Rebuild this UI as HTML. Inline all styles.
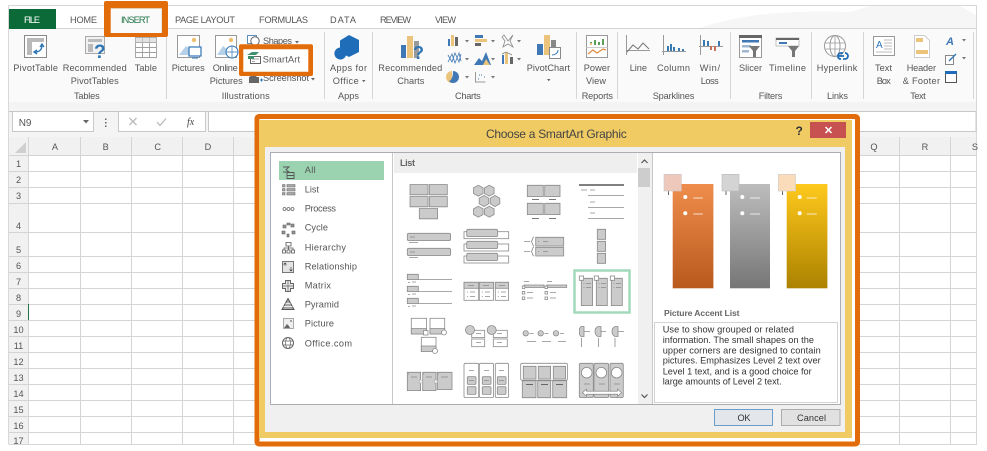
<!DOCTYPE html>
<html><head><meta charset="utf-8"><style>
html,body{margin:0;padding:0;background:#fff;width:987px;height:451px;overflow:hidden}
svg{display:block;filter:blur(.35px)}
text{font-family:"Liberation Sans",sans-serif;font-size:9.2px;fill:#555;white-space:pre}
.g{fill:#cbcbcb;stroke:#8a8a8a;stroke-width:.8}
.w{fill:#fff;stroke:#8a8a8a;stroke-width:.8}
.l{stroke:#8a8a8a;stroke-width:.8;fill:none}
.i{fill:none;stroke:#777;stroke-width:1}
</style></head><body>
<svg width="987" height="451" viewBox="0 0 987 451" xmlns="http://www.w3.org/2000/svg">
<defs>
<linearGradient id="o" x1="0" y1="0" x2="0" y2="1"><stop offset="0" stop-color="#ef8d4c"/><stop offset="1" stop-color="#b9591c"/></linearGradient>
<linearGradient id="h" x1="0" y1="0" x2="0" y2="1"><stop offset="0" stop-color="#bdbdbd"/><stop offset="1" stop-color="#767676"/></linearGradient>
<linearGradient id="y" x1="0" y1="0" x2="0" y2="1"><stop offset="0" stop-color="#ffc91c"/><stop offset="1" stop-color="#ac8200"/></linearGradient>
</defs>
<rect width="987" height="451" fill="#fff"/>
<!-- window -->
<rect x="8.5" y="5.5" width="968" height="439" fill="#fff" stroke="#d8d8d8"/>
<rect x="9" y="6" width="967" height="22" fill="#fff"/>
<path d="M700 28C740 14 790 10 850 12L870 6H960L976 15V28Z" fill="#f6f6f6"/>
<rect x="9" y="28" width="967" height="74" fill="#fafafa"/>
<line x1="9" y1="28.5" x2="976" y2="28.5" stroke="#d4d4d4"/>
<rect x="9" y="102" width="967" height="35" fill="#f4f4f4"/>
<line x1="9" y1="111.5" x2="976" y2="111.5" stroke="#c6c6c6"/>
<!-- tabs -->
<rect x="9" y="9" width="47" height="20" fill="#0b6a38"/>
<text x="24" y="23" textLength="16" style="fill:#fff">FILE</text>
<text x="70" y="23" textLength="27">HOME</text>
<rect x="110" y="8" width="52" height="26" fill="#fafafa" stroke="#d4d4d4"/>
<text x="121" y="23" textLength="29" style="fill:#217346">INSERT</text>
<text x="175" y="23" textLength="60">PAGE LAYOUT</text>
<text x="259" y="23" textLength="49">FORMULAS</text>
<text x="330" y="23" textLength="26">DATA</text>
<text x="380" y="23" textLength="31">REVIEW</text>
<text x="435" y="23" textLength="21">VIEW</text>
<!-- separators -->
<path d="M166.5 32V99M324.5 32V99M372.5 32V99M576.5 32V99M617.5 32V99M730.5 32V99M811.5 32V99M863.5 32V99M973.500 32V99" stroke="#d6d6d6"/>
<!-- ribbon labels -->
<g>
<text x="13.3" y="71" textLength="44.7">PivotTable</text>
<text x="62.7" y="71" textLength="64">Recommended</text>
<text x="70.7" y="84" textLength="48">PivotTables</text>
<text x="134.7" y="71" textLength="22.3">Table</text>
<text x="74" y="99" textLength="25.7">Tables</text>
<text x="171.7" y="71" textLength="33">Pictures</text>
<text x="212.7" y="71" textLength="25">Online</text>
<text x="209.7" y="84" textLength="33">Pictures</text>
<text x="263" y="44" textLength="29">Shapes</text>
<text x="263" y="81" textLength="46">Screenshot</text>
<text x="221.7" y="99" textLength="48">Illustrations</text>
<text x="330" y="71" textLength="37">Apps for</text>
<text x="332.7" y="84" textLength="26">Office</text>
<text x="338" y="99" textLength="21">Apps</text>
<text x="378.3" y="71" textLength="64">Recommended</text>
<text x="397.3" y="84" textLength="27">Charts</text>
<text x="455" y="99" textLength="25.7">Charts</text>
<text x="526.7" y="71" textLength="43.3">PivotChart</text>
<text x="583.7" y="71" textLength="26.3">Power</text>
<text x="586" y="84" textLength="20">View</text>
<text x="581.7" y="99" textLength="31.3">Reports</text>
<text x="629.7" y="71" textLength="17.3">Line</text>
<text x="657" y="71" textLength="33">Column</text>
<text x="699.7" y="71" textLength="20.3">Win/</text>
<text x="700.7" y="84" textLength="18">Loss</text>
<text x="652.7" y="99" textLength="41.6">Sparklines</text>
<text x="739" y="71" textLength="23">Slicer</text>
<text x="769" y="71" textLength="37">Timeline</text>
<text x="758.7" y="99" textLength="23.6">Filters</text>
<text x="816.7" y="71" textLength="40.6">Hyperlink</text>
<text x="827" y="99" textLength="21">Links</text>
<text x="875" y="71" textLength="17">Text</text>
<text x="876.7" y="84" textLength="14">Box</text>
<text x="906.7" y="71" textLength="29.3">Header</text>
<text x="902.7" y="84" textLength="37.3">&amp; Footer</text>
<text x="910.3" y="99" textLength="15.4">Text</text>
</g>
<path d="M295 41h4l-2 2.5zM311 78h4l-2 2.5zM362 80h3.5l-1.7 2.2zM547 79h3.5l-1.7 2.2z" fill="#666"/>
<!-- icons: tables -->
<rect x="24.5" y="35.5" width="22" height="22" fill="#fff" stroke="#888"/>
<path d="M27 38h17v4H32v13h-5z" fill="#b9b9b9"/>
<path d="M35 52c4 0 7-2 7-7M40 47l2-3 2 3M37 50l-3 2 3 2" fill="none" stroke="#2e75b6" stroke-width="1.4"/>
<rect x="85.5" y="36.5" width="19" height="17" fill="#f1f1f1" stroke="#aaa"/>
<path d="M88 39h14v3H88zM88 44h5v8h-5z" fill="#bbb"/>
<text x="94" y="58" style="font-size:19px;font-weight:bold;fill:#2e75b6">?</text>
<path d="M135.5 37.5h21v20h-21zM135.5 42.5h21M135.5 47.5h21M135.5 52.5h21M142.5 37.5v20M149.5 37.5v20" fill="#fff" stroke="#a0a0a0" stroke-width=".9"/>
<rect x="135.5" y="37.5" width="21" height="5" fill="#d0d0d0" opacity=".6"/>
<!-- pictures -->
<rect x="177.5" y="35.5" width="22" height="22" fill="#fff" stroke="#999"/>
<path d="M179 55l7-9 5 4 3 5z" fill="#b6d0e8"/><circle cx="194" cy="40" r="2.2" fill="#ecc06f"/>
<rect x="189" y="47" width="12" height="9" fill="#fff" stroke="#2e75b6" stroke-width="1.2"/><path d="M192 58h6" stroke="#2e75b6"/>
<rect x="215.5" y="35.5" width="21" height="22" fill="#fff" stroke="#999"/>
<path d="M217 55l6-9 5 4 3 5z" fill="#b6d0e8"/><circle cx="231" cy="40" r="2.2" fill="#ecc06f"/>
<circle cx="232" cy="52" r="6" fill="#fff" stroke="#2e75b6"/><path d="M226 52h12M232 46v12" stroke="#2e75b6" stroke-width=".7"/>
<rect x="247.5" y="35.5" width="9" height="8" fill="#fff" stroke="#5b8dbd"/><circle cx="255" cy="41" r="4.2" fill="#fff" stroke="#666"/>
<path d="M249 77l3-1.5h3l2 1.5h2v6h-10z" fill="#666"/><path d="M260 80h3M261.5 78.5v3" stroke="#2e75b6"/>
<!-- apps -->
<path d="M349 35l10 5v12l-10 5-3-1.500a6 6 0 1 1-6-8v-7z" fill="#1f6cb8"/>
<!-- recommended charts -->
<rect x="401" y="45" width="5" height="13" fill="#3f78b5"/><rect x="407" y="36" width="6" height="22" fill="#ecc37a"/><rect x="414" y="41" width="5" height="17" fill="#9a9a9a"/>
<text x="413" y="59" style="font-size:18px;font-weight:bold;fill:#2e75b6">?</text>
<!-- small charts -->
<rect x="448" y="39" width="2" height="7" fill="#3f78b5"/><rect x="451" y="35" width="3" height="11" fill="#ecc37a"/><rect x="455" y="37" width="3" height="9" fill="#666"/>
<path d="M465 40h4l-2 2.500zM491 40h4l-2 2.500zM517 40h4l-2 2.500zM465 58h4l-2 2.500zM491 58h4l-2 2.500zM517 58h4l-2 2.500zM465 76h4l-2 2.500zM491 76h4l-2 2.500z" fill="#777"/>
<rect x="475" y="35" width="8" height="3" fill="#3f78b5"/><rect x="475" y="39" width="12" height="3" fill="#ecc37a"/><rect x="475" y="43" width="6" height="3" fill="#666"/>
<path d="M504 35l4 6 5-6 -3 6 3 6-5-3-5 3 2-6-3-4z" fill="none" stroke="#888" stroke-width=".8"/>
<path d="M448 55l4 7 3-9 4 9 2-8M448 62l4-8 3 9 4-10 2 8" fill="none" stroke="#3f78b5" stroke-width=".8"/>
<path d="M474 65l5-7 3 3 4-9 5 13z" fill="#3f78b5"/><path d="M483 65l3-6 4 6z" fill="#ecc37a"/>
<rect x="502" y="55" width="2" height="9" fill="#3f78b5"/><rect x="505" y="53" width="3" height="11" fill="#ecc37a"/><rect x="510" y="57" width="3" height="7" fill="#666"/><path d="M502 54l4-2 6 3" fill="none" stroke="#777" stroke-width=".7"/>
<path d="M453 71a6 6 0 1 0 0 12z" fill="#ecc37a" transform="translate(-1)"/><path d="M453 71a6 6 0 0 1 0 12c-2 0-3-1-4-2 3-1 4-5 4-10z" fill="#3f78b5"/>
<path d="M475.500 72v10h10" stroke="#999" fill="none"/><path d="M478 79h1M481 75h1M484 77h1M479 75h1" stroke="#3f78b5"/>
<!-- pivotchart -->
<rect x="537" y="44" width="6" height="11" fill="#3f78b5"/><rect x="544" y="35" width="6" height="20" fill="#ecc37a"/><rect x="551" y="40" width="5" height="15" fill="#888"/>
<rect x="549.500" y="47.500" width="11" height="11" fill="#fff" stroke="#888"/><path d="M552 55c3 0 6-2 6-5" fill="none" stroke="#2e75b6"/>
<!-- power view -->
<rect x="586.500" y="35.500" width="21" height="22" fill="#fff" stroke="#999"/>
<path d="M590 45v-3h2v3zM594 45v-5h2v5zM598 45v-3h2v3zM602 45v-6h2v6z" fill="#5aa05a"/><path d="M590 45v-2h2v2z" fill="#ecc37a"/>
<path d="M588 54l5-4 4 3 6-4 3 1" fill="none" stroke="#e08a3c" stroke-width="1.200"/><path d="M586.500 47.500h21" stroke="#ccc"/>
<!-- sparklines -->
<path d="M626.500 35v20M626 50.500h24" stroke="#999" fill="none"/><path d="M627 52l6-7 5 4 5-6 6 6" fill="none" stroke="#777"/>
<path d="M663.500 35v20M662 51.500h24" stroke="#999" fill="none"/><path d="M667 46h2v5h-2zM670 44h2v7h-2zM673 47h2v4h-2zM678 48h2v3h-2zM682 49h2v2h-2z" fill="#3a7ab0"/>
<path d="M700.500 35v20M699 46.500h24" stroke="#999" fill="none"/><path d="M703 40h2v6h-2zM707 41h2v5h-2zM718 41h2v5h-2z" fill="#3a7ab0"/><path d="M710 46h2v4h-2zM714 46h2v5h-2z" fill="#c7735a"/>
<!-- filters -->
<rect x="739.500" y="35.500" width="22" height="22" fill="#fff" stroke="#999"/>
<rect x="739" y="35" width="23" height="3" fill="#666"/>
<rect x="742" y="40" width="17" height="2.500" fill="#3f78b5"/><rect x="742" y="45" width="9" height="2.500" fill="#9fb8d0"/><rect x="742" y="50" width="7" height="2.500" fill="#9fb8d0"/>
<path d="M749 46h11l-4 5v6h-3v-6z" fill="#777"/>
<rect x="776" y="38" width="23" height="8" fill="#fff" stroke="#aaa" stroke-width=".7"/><rect x="776" y="38" width="23" height="2" fill="#666"/><rect x="779" y="42" width="8" height="2" fill="#3f78b5"/><path d="M788 46h11l-4 5v6h-3v-6z" fill="#777"/>
<!-- hyperlink -->
<circle cx="835" cy="46" r="10.500" fill="#fff" stroke="#999"/><ellipse cx="835" cy="46" rx="5" ry="10.500" fill="none" stroke="#999"/><path d="M825 43h20M825 49h20M835 35v22" stroke="#999" stroke-width=".8"/>
<path d="M838 56a3 3 0 0 1 3-3h2M846 53h-1a3 3 0 0 1 0 6h-2M844 56h-5M841 59h-1a3 3 0 0 1-2-3" fill="none" stroke="#1f6cb8" stroke-width="1.800"/>
<!-- text -->
<rect x="873.500" y="36.500" width="21" height="19" fill="#fff" stroke="#999"/>
<text x="876" y="48" style="font-size:10px;fill:#2e75b6">A</text><path d="M884 40h8M884 43h8M884 46h8M884 49h8M876 52h16" stroke="#bbb"/>
<path d="M914.500 35.500h10l5 5v17h-15z" fill="#fff" stroke="#ccc"/><rect x="916" y="38" width="7" height="4" fill="#ecc37a"/><rect x="916" y="50" width="12" height="4" fill="#ecc37a"/>
<text x="946" y="45" style="font-size:11px;font-weight:bold;font-style:italic;fill:#3f78b5">A</text>
<path d="M962 39h4l-2 2.500zM962 57h4l-2 2.500z" fill="#777"/>
<path d="M945.500 55.500h8v9h-8z" fill="#fff" stroke="#888"/><path d="M949 61l7-7" stroke="#2e75b6" stroke-width="1.300"/>
<rect x="945.500" y="71.500" width="11" height="11" fill="#fff" stroke="#555"/><rect x="945" y="71" width="12" height="3" fill="#1f6cb8"/>
<!-- formula bar -->
<rect x="12.500" y="111.500" width="81" height="20" fill="#fff" stroke="#c8c8c8"/>
<text x="18.700" y="126" style="font-size:10px">N9</text>
<path d="M83 120h6l-3 3.500z" fill="#666"/>
<path d="M105 118.500h1.500v1.500H105zM105 122h1.500v1.500H105zM105 125.500h1.500v1.500H105z" fill="#666"/>
<rect x="118.500" y="111.500" width="87" height="20" fill="#fff" stroke="#c8c8c8"/>
<path d="M129.500 118l7 7M136.500 118l-7 7" stroke="#bbb" stroke-width="1.300"/>
<path d="M157 122l3 3.500 6-7" fill="none" stroke="#bbb" stroke-width="1.300"/>
<text x="187" y="125" style="font-size:10px;font-family:'Liberation Serif',serif;font-style:italic;fill:#444">fx</text>
<rect x="208.500" y="111.500" width="767.500" height="20" fill="#fff" stroke="#c8c8c8"/>
<!-- sheet -->
<rect x="9" y="137" width="967" height="18" fill="#f1f1f1"/>
<rect x="9" y="155" width="19" height="289" fill="#f1f1f1"/>
<path d="M28.500 137V444M80.500 137V444M131.500 137V444M182.500 137V444M233.500 137V444M848.500 137V444M899.500 137V444M950.500 137V444" stroke="#d4d4d4"/>
<path d="M9 155.500H976M9 171.500H976M9 187.500H976M9 203.500H976M9 232.500H976M9 256.500H976M9 272.500H976M9 288.500H976M9 304.500H976M9 320.500H976M9 336.500H976M9 352.500H976M9 368.500H976M9 384.500H976M9 400.500H976M9 416.500H976M9 432.500H976" stroke="#d4d4d4"/>
<path d="M26 142v11H15z" fill="#cfcfcf"/>
<rect x="28" y="304" width="1" height="16" fill="#217346"/>
<g style="text-anchor:middle">
<text x="55" y="150">A</text><text x="105.700" y="150">B</text><text x="157.700" y="150">C</text><text x="208" y="150">D</text><text x="874" y="150">Q</text><text x="925" y="150">R</text><text x="975" y="150">S</text>
<text x="18.500" y="167">1</text><text x="18.500" y="183">2</text><text x="18.500" y="199">3</text><text x="18.500" y="229">4</text><text x="18.500" y="253">5</text><text x="18.500" y="269">6</text><text x="18.500" y="285">7</text><text x="18.500" y="301">8</text><text x="18.500" y="317">9</text><text x="18.500" y="333">10</text><text x="18.500" y="349">11</text><text x="18.500" y="365">12</text><text x="18.500" y="381">13</text><text x="18.500" y="397">14</text><text x="18.500" y="413">15</text><text x="18.500" y="429">16</text><text x="18.500" y="444">17</text>
</g>
<rect x="0" y="444.500" width="250" height="7" fill="#fff"/>
<line x1="9" y1="444.500" x2="254" y2="444.500" stroke="#d8d8d8"/>
<!-- dialog -->
<rect x="257" y="116.500" width="600.500" height="327.500" rx="2" fill="#fff" stroke="#e36c0a" stroke-width="5"/>
<rect x="259" y="120" width="593" height="318" fill="#f0cb64"/>
<rect x="265" y="147" width="580" height="285" fill="#f0f0f0"/>
<text x="486" y="138" textLength="140.700" style="font-size:12px;fill:#444">Choose a SmartArt Graphic</text>
<text x="795.500" y="135" style="font-size:12px;font-weight:bold;fill:#333">?</text>
<rect x="810" y="122" width="36" height="16" fill="#c75050"/>
<path d="M825.500 127l6 6M831.500 127l-6 6" stroke="#fff" stroke-width="1.500"/>
<rect x="270.500" y="152.500" width="570" height="252" fill="#fff" stroke="#abadb3"/>
<path d="M392.500 153V404M652.500 153V404" stroke="#c8c8c8"/>
<!-- left list -->
<rect x="279" y="161" width="105" height="19" fill="#9bd3b0"/>
<g>
<text x="304.700" y="173" textLength="11">All</text>
<text x="304.700" y="192.300" textLength="14.300">List</text>
<text x="304.700" y="211.700" textLength="31.300">Process</text>
<text x="304.700" y="230.700" textLength="23.300">Cycle</text>
<text x="304.700" y="250.300" textLength="41.300">Hierarchy</text>
<text x="304.700" y="269.700" textLength="52.300">Relationship</text>
<text x="304.700" y="288.700" textLength="26.300">Matrix</text>
<text x="304.700" y="307.700" textLength="34.300">Pyramid</text>
<text x="304.700" y="326.700" textLength="29.300">Picture</text>
<text x="304.700" y="346.300" textLength="47.300">Office.com</text>
</g>
<!-- left icons -->
<path d="M283 167h6l-3 2.500 3 2.500h-6M287 172.500h7v6h-7zM287 175.500h7" fill="none" stroke="#555" stroke-width=".9"/>
<path d="M282.500 184.500h2.500v2.500h-2.500zM282.500 188.500h2.500v2.500h-2.500zM282.500 192.500h2.500v2.500h-2.500zM287 184.500h8v2.500h-8zM287 188.500h8v2.500h-8zM287 192.500h8v2.500h-8z" fill="#aaa" stroke="#666" stroke-width=".6"/>
<g fill="none" stroke="#666" stroke-width=".8"><circle cx="284.500" cy="209" r="1.500"/><circle cx="288.500" cy="209" r="1.500"/><circle cx="292.500" cy="209" r="1.500"/></g>
<path d="M283 225h3v3h-3zM291 224h3v3h-3zM282 231h3v3h-3zM292 231h3v3h-3zM287 223h3v2h-3zM287 234h2v3h-2z" fill="#999" stroke="#555" stroke-width=".6"/>
<path d="M286 242.500h5v3.500h-5zM282.500 250h3v3h-3zM287 250h3v3h-3zM291.500 250h3v3h-3zM284 250v-2h9v2M288.500 246v4" fill="none" stroke="#555" stroke-width=".8"/>
<rect x="282.500" y="261.500" width="11" height="11" fill="#e4e4e4" stroke="#777"/><path d="M285 266v-3l-1.500 1.500M285 263l1.500 1.500M291 267v4l-1.500-1.500M291 271l1.500-1.500" fill="none" stroke="#444" stroke-width=".7"/>
<path d="M285.500 280.500h5v3h3v5h-3v3h-5v-3h-3v-5h3z" fill="#e4e4e4" stroke="#666"/><path d="M288 280v12M282 286h12" stroke="#666" stroke-width=".7"/>
<path d="M288 298.500l6 11h-12z" fill="#aaa" stroke="#555"/><path d="M285.500 303.500h5M283.500 306.500h9" stroke="#fff" stroke-width=".8"/>
<rect x="283.500" y="318.500" width="10" height="10" fill="#eee" stroke="#aaa"/><path d="M284 328l3-4 2 2 1 2z" fill="#666"/><circle cx="291" cy="321" r="1" fill="#888"/>
<circle cx="288" cy="343" r="5.500" fill="none" stroke="#666"/><ellipse cx="288" cy="343" rx="2.500" ry="5.500" fill="none" stroke="#666" stroke-width=".7"/><path d="M282.500 341h11M282.500 345h11" stroke="#666" stroke-width=".7"/>
<!-- middle header and scrollbar -->
<rect x="394" y="153" width="243" height="20" fill="#efefef"/>
<text x="400" y="166" style="font-weight:bold;fill:#666" textLength="15">List</text>
<rect x="638" y="153" width="14" height="251" fill="#f0f0f0"/>
<rect x="638" y="168" width="12" height="19" fill="#cdcdcd"/>
<path d="M641.500 163l3-3 3 3M641.500 394.500l3 3 3-3" fill="none" stroke="#555" stroke-width="1.200"/>
<!-- r1 -->
<path class="g" d="M410 184.500h18v10.300h-18zM429.300 184.500h18v10.300h-18zM410 196.500h18v10.300h-18zM429.300 196.500h18v10.300h-18zM419.300 208.500h18.300v10.300h-18.300z"/>
<g class="g"><path d="M478.300 185.200l4.800 2.700v5.600l-4.800 2.700-4.800-2.700v-5.600zM489.300 185.200l4.800 2.700v5.600l-4.800 2.700-4.800-2.700v-5.600zM484 195.500l4.800 2.700v5.600l-4.800 2.700-4.800-2.700v-5.600zM495 195.500l4.800 2.700v5.600l-4.800 2.700-4.800-2.700v-5.600zM478.300 206.200l4.800 2.700v5.600l-4.800 2.700-4.800-2.700v-5.600zM489.300 206.200l4.800 2.700v5.600l-4.800 2.700-4.800-2.700v-5.600z"/></g>
<path class="g" d="M527.300 185.300h16v11.300h-16zM544.700 185.300h15.300v11.300h-15.300zM527.300 203.300h16v11.300h-16zM544.700 203.300h15.300v11.300h-15.300z"/>
<path d="M532 199.500h7M549 199.500h7M532 218.500h7M549 218.500h7" stroke="#777"/>
<rect x="579" y="184" width="45" height="2" fill="#808080"/>
<path class="l" d="M588 195.500h36M588 207.500h36M588 218.500h36M581 190h6M590 190h5M590 202h5M590 213h5"/>
<!-- r2 -->
<g class="g"><rect x="407.300" y="233.300" width="43.300" height="7.300" rx="1.500"/><rect x="407.300" y="248.300" width="43.300" height="7.300" rx="1.500"/></g>
<path class="l" d="M409 242.500h9M409 257.500h9M410 237h5M410 252h5"/>
<g class="w"><rect x="464" y="231.700" width="44.700" height="7"/><rect x="464" y="244" width="44.700" height="7"/><rect x="464" y="256" width="44.700" height="7"/></g>
<g class="g"><rect x="466.700" y="229.300" width="31" height="7.300" rx="1.500"/><rect x="466.700" y="241.300" width="31" height="7.300" rx="1.500"/><rect x="466.700" y="253.300" width="31" height="7.300" rx="1.500"/></g>
<path class="g" d="M535.700 237.300h28v8.700h-28zM535.700 247.300h28v8.700h-28z"/>
<path class="l" d="M524 241.500h6M524 251.500h6M534 237c-2 0-1 4-3 4.500 2 .5 1 4.500 3 4.500M534 247c-2 0-1 4-3 4.500 2 .5 1 4.500 3 4.500M538 241.500h1M543 241.500h5M538 251.500h1M543 251.500h5"/>
<path class="g" d="M597.300 229.300h8.300v10h-8.300zM597.300 241.300h8.300v10h-8.300zM597.300 253.300h8.300v10h-8.300z"/>
<!-- r3 -->
<path class="g" d="M407.300 274.300h11v5.300h-11zM407.300 286.300h11v5.300h-11zM407.300 298.300h11v5.300h-11z"/>
<path class="l" d="M418 279.500h34M418 291.500h34M418 303.500h34M408 282.500h2M412 282h4M408 294.500h2M412 294h4M408 306.500h2M412 306h4"/>
<g class="w"><rect x="464" y="282.300" width="14.700" height="18"/><rect x="479.300" y="282.300" width="14.300" height="18"/><rect x="495.300" y="282.300" width="13.300" height="18"/></g>
<g class="g"><rect x="464" y="282.300" width="14.700" height="6"/><rect x="479.300" y="282.300" width="14.300" height="6"/><rect x="495.300" y="282.300" width="13.300" height="6"/></g>
<path class="l" d="M468 285.500h6M483 285.500h6M499 285.500h6M467 292h1M470 292h5M467 296.500h1M470 296.500h5M482 292h1M485 292h5M482 296.500h1M485 296.500h5M498 292h1M501 292h5M498 296.500h1M501 296.500h5M524 281.500h5M547 281.500h5"/>
<path class="g" d="M524 285h20v2.500h-20zM546.700 285h20v2.500h-20z"/>
<g class="w"><rect x="522.300" y="286" width="2.500" height="2.500"/><rect x="522.300" y="291.500" width="2.500" height="2.500"/><rect x="522.300" y="297" width="2.500" height="2.500"/><rect x="545" y="286" width="2.500" height="2.500"/><rect x="545" y="291.500" width="2.500" height="2.500"/><rect x="545" y="297" width="2.500" height="2.500"/></g>
<path class="l" d="M527 292.500h6M527 298h6M550 292.500h6M550 298h6"/>
<rect x="574.500" y="270.500" width="55" height="42" fill="#fff" stroke="#a3d9bb" stroke-width="2.500"/>
<path class="g" d="M581.300 278.300h11.300v27.300h-11.300zM596.300 278.300h11v27.300h-11zM611.300 278.300h11v27.300h-11z"/>
<g class="w"><rect x="579.300" y="276" width="4.300" height="4.300"/><rect x="594.300" y="276" width="4.300" height="4.300"/><rect x="610.300" y="276" width="4.300" height="4.300"/></g>
<path class="l" d="M583.500 283.500h1M586 283.500h5M583.500 287.500h1M586 287.500h5M598.500 283.500h1M601 283.500h5M598.500 287.500h1M601 287.500h5M613.500 283.500h1M616 283.500h5M613.500 287.500h1M616 287.500h5"/>
<!-- r4 -->
<g class="w"><rect x="411.300" y="318.300" width="15.300" height="15.700"/><rect x="430" y="318.300" width="14.700" height="15.700"/><rect x="421.300" y="337.300" width="14.700" height="14.300"/></g>
<path class="g" d="M411.300 328.500h15.300v5.500h-15.300zM430 328.500h14.700v5.500h-14.700zM421.300 346h14.700v5.600h-14.700z"/>
<rect class="w" x="423.500" y="330.500" width="4.500" height="4.500"/><circle class="w" cx="444" cy="332.500" r="2.500"/><circle class="w" cx="435" cy="351" r="2.500"/>
<g class="w"><rect x="471.700" y="330.300" width="13" height="7.300"/><rect x="471.700" y="339" width="13" height="7.700"/><rect x="493.300" y="330.300" width="14" height="7.300"/><rect x="493.300" y="339" width="14" height="7.700"/></g>
<circle class="g" cx="470" cy="330" r="4.500"/><circle class="g" cx="491.700" cy="330" r="4.500"/>
<path class="l" d="M476 333.500h5M476 342.500h5M497 333.500h5M497 342.500h5"/>
<g class="g"><circle cx="525.700" cy="333.300" r="2.700"/><circle cx="540.700" cy="333.300" r="2.700"/><circle cx="556" cy="333.300" r="2.700"/></g>
<path class="l" d="M529.500 333.500h4M544.500 333.500h4M560 333.500h4M527 341.500h9M542 341.500h9M558 341.500h8"/>
<path class="g" d="M581 326.500h3v10h-3l-1.500-2v-6zM598 326.500h3v10h-3c-2-1-3-3-3-5s1-4 3-5zM615 326.500h3v10h-3c-2-1-3-3-3-5s1-4 3-5z"/>
<path class="l" d="M584 331.500h6M601 331.500h5M618 331.500h6M581.500 338v9M598.500 338v9M615 338v9"/>
<!-- r5 -->
<path class="g" d="M407.300 372.300h13.300v8l1.500 1-1.500 1v8.300h-13.300zM422.700 372.300h13.300v8l1.500 1-1.500 1v8.300h-13.300zM437.300 372.300h14.700v17.300h-14.700z"/>
<path d="M420 379l3 2.500-3 2.500zM435 379l3 2.500-3 2.500z" fill="#fff" stroke="#999" stroke-width=".5"/>
<path class="l" d="M411 377h6M426 377h6M441 377h7M408 374h1M423 374h1M438 374h1"/>
<g class="w" style="fill:#fff"><rect x="464" y="363.300" width="14.700" height="34.300" rx="1.500"/><rect x="479.300" y="363.300" width="14.300" height="34.300" rx="1.500"/><rect x="495.300" y="363.300" width="13.300" height="34.300" rx="1.500"/></g>
<g class="g"><rect x="467.300" y="376.700" width="8.700" height="7.700" rx="1"/><rect x="467.300" y="386.700" width="8.700" height="7.700" rx="1"/><rect x="482.300" y="376.700" width="8.700" height="7.700" rx="1"/><rect x="482.300" y="386.700" width="8.700" height="7.700" rx="1"/><rect x="497.300" y="376.700" width="8.700" height="7.700" rx="1"/><rect x="497.300" y="386.700" width="8.700" height="7.700" rx="1"/></g>
<path class="l" d="M469 370.500h5M484 370.500h5M499 370.500h5M469 380.500h5M484 380.500h5M499 380.500h5"/>
<rect class="w" x="520.700" y="363.300" width="46.700" height="17" rx="1.500"/>
<path class="g" d="M523.300 366.300h12.700v12.700h-12.700zM538.300 366.300h12.300v12.700h-12.300zM553.300 366.300h12.300v12.700h-12.300zM522.300 380.700h13.700v17h-13.700zM537.700 380.700h13v17h-13zM552.700 380.700h14v17h-14z"/>
<path d="M526 384.500h7M541 384.500h7M556 384.500h7" stroke="#666"/>
<g class="g"><rect x="579.300" y="363.300" width="14" height="34.300" rx="1.500"/><rect x="594" y="363.300" width="14.700" height="34.300" rx="1.500"/><rect x="610" y="363.300" width="13.300" height="34.300" rx="1.500"/></g>
<g class="w"><circle cx="586.700" cy="372.700" r="5.300"/><circle cx="601.300" cy="372.700" r="5.300"/><circle cx="616.700" cy="372.700" r="5.300"/></g>
<path class="l" d="M584 384h6M599 384h6M614 384h6"/>
<path d="M582.500 392.700l4-3.500v2h31v-2l4 3.500-4 3.500v-2h-31v2z" fill="#fff" stroke="#777" stroke-width=".6"/>
<!-- preview -->
<rect x="672.700" y="184" width="40.700" height="104.300" fill="url(#o)"/>
<rect x="730" y="184" width="40" height="104.300" fill="url(#h)"/>
<rect x="786.700" y="184" width="40.700" height="104.300" fill="url(#y)"/>
<path d="M668.500 190v5M726 190v5M782.500 190v5" stroke="#666"/>
<rect x="664" y="174.300" width="17.300" height="16.700" fill="#eec8bb" stroke="#c9c9c9" stroke-width=".6"/>
<rect x="722" y="174.300" width="17" height="16.700" fill="#d4d4d4" stroke="#bbb" stroke-width=".6"/>
<rect x="778.300" y="174.300" width="17.300" height="16.700" fill="#fadcbb" stroke="#ccc" stroke-width=".6"/>
<g fill="#fff"><circle cx="685.300" cy="197" r="2"/><circle cx="685.300" cy="213.300" r="2"/><circle cx="742.300" cy="197" r="2"/><circle cx="742.300" cy="213.300" r="2"/><circle cx="799.700" cy="197" r="2"/><circle cx="799.700" cy="213.300" r="2"/></g>
<path d="M693.300 198h9.500M693.300 214h9.500M750 198h10M750 214h10M806.700 198h10M806.700 214h10" stroke="#fff" stroke-opacity=".75"/>
<text x="664" y="316" textLength="75.500" style="font-weight:bold;font-size:8.600px;fill:#666">Picture Accent List</text>
<rect x="654.500" y="322.500" width="183" height="80" fill="#fff" stroke="#d2d2d2"/>
<g>
<text x="662.700" y="332.500" textLength="131.300" style="fill:#333">Use to show grouped or related</text>
<text x="662.700" y="343" textLength="151.300" style="fill:#333">information. The small shapes on the</text>
<text x="662.700" y="353.500" textLength="158" style="fill:#333">upper corners are designed to contain</text>
<text x="662.700" y="363.500" textLength="158" style="fill:#333">pictures. Emphasizes Level 2 text over</text>
<text x="662.700" y="374.500" textLength="149" style="fill:#333">Level 1 text, and is a good choice for</text>
<text x="662.700" y="384.500" textLength="119" style="fill:#333">large amounts of Level 2 text.</text>
</g>
<rect x="714.500" y="409.500" width="58" height="16" fill="#e3e6ea" stroke="#6a9ccc"/>
<rect x="781.500" y="409.500" width="58.500" height="16" fill="#e1e1e1" stroke="#adadad"/>
<text x="737.500" y="421" textLength="13" style="fill:#333">OK</text>
<text x="797" y="421" textLength="29" style="fill:#333">Cancel</text>
<!-- orange highlight boxes -->
<path fill-rule="evenodd" fill="#e36c0a" d="M106 1h60a2 2 0 0 1 2 2v32a2 2 0 0 1-2 2h-60a2 2 0 0 1-2-2v-32a2 2 0 0 1 2-2zM110.700 8.300v24.700h51.300v-24.700z"/>
<rect x="243.300" y="49.300" width="65" height="22.400" fill="#fff"/>
<path fill-rule="evenodd" fill="#e36c0a" d="M241 44.300h70a2 2 0 0 1 2 2v27.700a2 2 0 0 1-2 2h-70a2 2 0 0 1-2-2v-27.700a2 2 0 0 1 2-2zM243.300 49.300v22.400h65v-22.400z"/>
<text x="262.700" y="62.500" textLength="37.300">SmartArt</text>
<rect x="250.500" y="56.500" width="10" height="7" fill="#fff" stroke="#666"/><path d="M252 59h7M252 61.500h3" stroke="#888" stroke-width=".7"/>
<path d="M247 55l5-3 7 0-3 3z" fill="#3e8f6b"/><path d="M248 56h6v3h-6z" fill="#3e8f6b"/>
</svg>
</body></html>
